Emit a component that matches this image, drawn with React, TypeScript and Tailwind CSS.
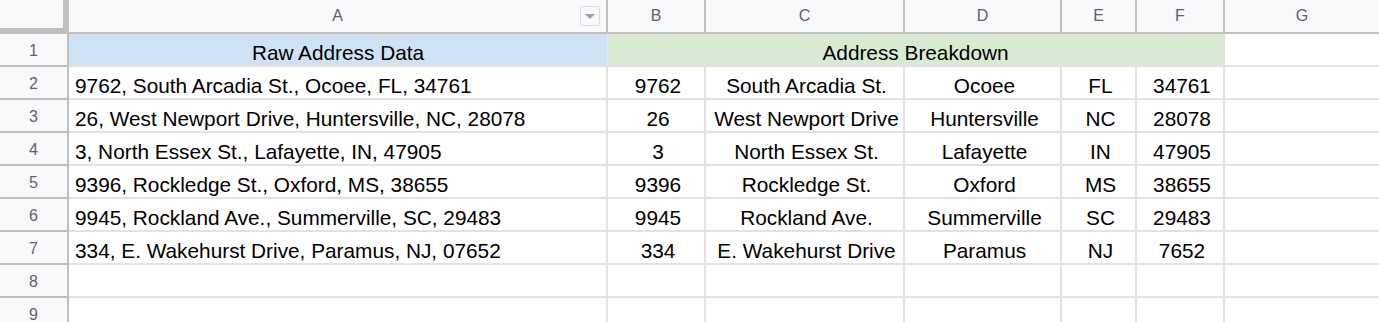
import React from "react";

const widths = [539, 98, 199, 157, 75, 88];
const letters = ["A", "B", "C", "D", "E", "F"];

const rows: string[][] = [
  ["9762, South Arcadia St., Ocoee, FL, 34761", "9762", "South Arcadia St.", "Ocoee", "FL", "34761"],
  ["26, West Newport Drive, Huntersville, NC, 28078", "26", "West Newport Drive", "Huntersville", "NC", "28078"],
  ["3, North Essex St., Lafayette, IN, 47905", "3", "North Essex St.", "Lafayette", "IN", "47905"],
  ["9396, Rockledge St., Oxford, MS, 38655", "9396", "Rockledge St.", "Oxford", "MS", "38655"],
  ["9945, Rockland Ave., Summerville, SC, 29483", "9945", "Rockland Ave.", "Summerville", "SC", "29483"],
  ["334, E. Wakehurst Drive, Paramus, NJ, 07652", "334", "E. Wakehurst Drive", "Paramus", "NJ", "7652"],
  ["", "", "", "", "", ""],
  ["", "", "", "", "", ""],
];

function RowHeader({ n }: { n: number }) {
  return (
    <div className="w-[69px] shrink-0 h-full bg-[#f8f9fa] border-r-2 border-b-2 border-[#c0c0c0] flex items-center justify-center pt-[3px] text-[16px] text-[#5f6368]">
      {n}
    </div>
  );
}

export default function App() {
  return (
    <div
      className="w-[1379px] h-[322px] overflow-hidden bg-white text-black"
      style={{ fontFamily: '"Liberation Sans", Arial, sans-serif' }}
    >
      {/* column header */}
      <div className="flex h-[34px] border-b-2 border-[#c0c0c0] bg-[#f8f9fa]">
        <div className="w-[69px] shrink-0 h-full flex">
          <div className="w-[67px] h-full bg-[#c0c0c0] flex flex-col">
            <div className="w-[63px] h-[28px] bg-[#f8f9fa]" />
          </div>
          <div className="w-[2px] h-full bg-[#c0c0c0]" />
        </div>
        {letters.map((l, i) => (
          <div
            key={l}
            className="relative shrink-0 h-full border-r-2 border-[#c0c0c0] flex items-center justify-center text-[16px] text-[#5f6368]"
            style={{ width: widths[i] }}
          >
            {l}
            {i === 0 && (
              <div className="absolute right-[6px] top-[6px] w-[20px] h-[20px] border border-[#dadce0] rounded-[2px] flex items-center justify-center">
                <div className="w-0 h-0 border-l-[5px] border-r-[5px] border-t-[5px] border-l-transparent border-r-transparent border-t-[#9aa0a6]" />
              </div>
            )}
          </div>
        ))}
        <div className="flex-1 h-full flex items-center justify-center text-[16px] text-[#5f6368]">G</div>
      </div>

      {/* row 1 */}
      <div className="flex h-[33px]">
        <RowHeader n={1} />
        <div className="shrink-0 h-full bg-[#cfe2f3] border-r border-b-2 border-r-[#e4ebf0] border-b-[#e2e2e2] flex items-end justify-center text-[20.8px] leading-[24px]" style={{ width: widths[0] }}>
          Raw Address Data
        </div>
        <div
          className="shrink-0 h-full bg-[#d9ead3] border-r-2 border-b-2 border-[#e2e2e2] flex items-end justify-center text-[20.8px] leading-[24px]"
          style={{ width: widths[1] + widths[2] + widths[3] + widths[4] + widths[5] }}
        >
          Address Breakdown
        </div>
        <div className="flex-1 h-full border-b-2 border-[#e2e2e2]" />
      </div>

      {rows.map((r, ri) => (
        <div key={ri} className="flex h-[33px]">
          <RowHeader n={ri + 2} />
          {r.map((c, ci) => (
            <div
              key={ci}
              className={
                "shrink-0 h-full border-r-2 border-b-2 border-[#e2e2e2] flex items-end text-[20.8px] leading-[24px] whitespace-nowrap overflow-hidden " +
                (ci === 0 ? "justify-start pl-[6px]" : "justify-center pl-[4px]")
              }
              style={{ width: widths[ci] }}
            >
              {c}
            </div>
          ))}
          <div className="flex-1 h-full border-b-2 border-[#e2e2e2]" />
        </div>
      ))}
      <div className="flex h-[33px]">
        <RowHeader n={9} />
        {widths.map((w, i) => (
          <div key={i} className="shrink-0 h-full border-r-2 border-[#e2e2e2]" style={{ width: w }} />
        ))}
      </div>
    </div>
  );
}
